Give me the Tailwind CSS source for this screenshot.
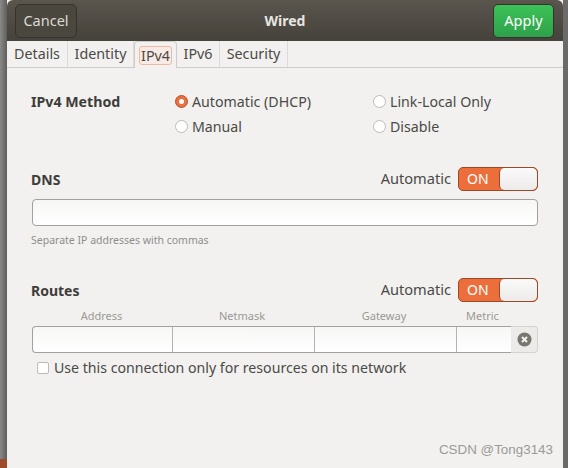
<!DOCTYPE html>
<html>
  <head>
    <title>Wired</title>
    <script src="https://cdn.jsdelivr.net/npm/@tailwindcss/browser@4"></script>
  </head>
  <body class="h-[468px] w-[568px] overflow-hidden bg-[#6f6f6e] font-['Noto_Sans',sans-serif] text-[14px] text-[#3d3d3a]">
    <div class="flex h-[468px]">
      <!-- desktop showing on the left -->
      <div class="flex w-[7px] flex-col justify-end bg-gradient-to-r from-[#8a8a89] to-[#5e5e5d]">
        <div class="h-[9px] bg-[#9c4a28]"></div>
      </div>

      <div class="relative flex w-[556px] flex-col bg-[#f2f1ef]">
        <!-- header -->
        <div class="flex h-[41px] items-center justify-between rounded-t-[6px] bg-gradient-to-b from-[#5a564e] to-[#45423b] pr-[9px] pl-[8px]">
          <div class="flex h-[34px] w-[62px] items-center justify-center rounded-[5px] border border-[#35332e] bg-[#4a473f] text-[14.5px] text-[#dcd9d2]">Cancel</div>
          <div class="text-[14px] font-bold text-[#e8e6e1]">Wired</div>
          <div class="flex h-[34px] w-[61px] items-center justify-center rounded-[5px] border border-[#35332e] bg-gradient-to-b from-[#3cc258] to-[#2ea14a] text-[14.5px] text-white">Apply</div>
        </div>

        <!-- tabs -->
        <div class="flex h-[27px] border-b border-[#cfcdc9] text-[14.3px] text-[#4a4a47]">
          <div class="flex w-[61px] items-center justify-center border-r border-[#dcdad6]">Details</div>
          <div class="flex w-[66px] items-center justify-center border-r border-[#dcdad6]">Identity</div>
          <div class="mb-[-1px] flex w-[43px] items-center justify-center rounded-t-[4px] border-x border-t border-[#cfcdc9] bg-[#f2f1ef]">
            <span class="rounded-[3px] border border-[#f0b9a2] bg-[#f8ebe5] px-[1px] leading-[17px]">IPv4</span>
          </div>
          <div class="flex w-[43px] items-center justify-center border-r border-[#dcdad6]">IPv6</div>
          <div class="flex w-[68px] items-center justify-center border-r border-[#dcdad6]">Security</div>
        </div>

        <!-- form -->
        <div class="flex flex-col pr-[25px] pl-[24px]">
          <div class="mt-[21px] flex">
            <div class="w-[144px] text-[14.2px] leading-[25px] font-bold">IPv4 Method</div>
            <div class="grid w-[320px] grid-cols-[198px_1fr] auto-rows-[25px] text-[14.2px] text-[#4a4a47]">
              <div class="flex items-center gap-[4px]">
                <span class="flex h-[13px] w-[13px] items-center justify-center rounded-full border border-[#b5532a] bg-[#e9703f]"><span class="h-[5px] w-[5px] rounded-full bg-white"></span></span>
                Automatic (DHCP)
              </div>
              <div class="flex items-center gap-[4px]">
                <span class="h-[13px] w-[13px] rounded-full border border-[#bdbbb7] bg-white"></span>
                Link-Local Only
              </div>
              <div class="flex items-center gap-[4px]">
                <span class="h-[13px] w-[13px] rounded-full border border-[#bdbbb7] bg-white"></span>
                Manual
              </div>
              <div class="flex items-center gap-[4px]">
                <span class="h-[13px] w-[13px] rounded-full border border-[#bdbbb7] bg-white"></span>
                Disable
              </div>
            </div>
          </div>

          <!-- DNS -->
          <div class="mt-[28px] flex h-[24px] items-center justify-between">
            <div class="font-bold">DNS</div>
            <div class="flex items-center gap-[7px]">
              <span class="text-[14.6px] text-[#4a4a47]">Automatic</span>
              <div class="flex h-[24px] w-[80px] overflow-hidden rounded-[5px] border border-[#9a4a2a] bg-[#ec6f3b]">
                <span class="w-[40px] pl-[8px] text-[14px] leading-[22px] text-white">ON</span>
                <span class="flex-1 rounded-[5px] border-l border-[#9a4a2a] bg-gradient-to-b from-[#fafafa] to-[#ecebe9]"></span>
              </div>
            </div>
          </div>
          <div class="mt-[8px] ml-[1px] h-[27px] rounded-[4px] border border-[#a3a19d] bg-gradient-to-b from-[#f7f7f6] to-white"></div>
          <div class="mt-[7px] text-[10.5px] leading-[14px] text-[#8f8e8b]">Separate IP addresses with commas</div>

          <!-- Routes -->
          <div class="mt-[31px] flex h-[24px] items-center justify-between">
            <div class="font-bold">Routes</div>
            <div class="flex items-center gap-[7px]">
              <span class="text-[14.6px] text-[#4a4a47]">Automatic</span>
              <div class="flex h-[24px] w-[80px] overflow-hidden rounded-[5px] border border-[#9a4a2a] bg-[#ec6f3b]">
                <span class="w-[40px] pl-[8px] text-[14px] leading-[22px] text-white">ON</span>
                <span class="flex-1 rounded-[5px] border-l border-[#9a4a2a] bg-gradient-to-b from-[#fafafa] to-[#ecebe9]"></span>
              </div>
            </div>
          </div>
          <div class="mt-[7px] ml-[1px] flex h-[15px] items-center text-center text-[11px] text-[#9a9996]">
            <span class="w-[139px]">Address</span>
            <span class="w-[142px]">Netmask</span>
            <span class="w-[142px]">Gateway</span>
            <span class="w-[55px]">Metric</span>
          </div>
          <div class="mt-[2px] ml-[1px] flex h-[27px]">
            <div class="flex flex-1 rounded-l-[4px] border border-r-0 border-[#a3a19d] bg-gradient-to-b from-[#f7f7f6] to-white">
              <div class="w-[140px] border-r border-[#b5b3af]"></div>
              <div class="w-[142px] border-r border-[#b5b3af]"></div>
              <div class="w-[142px] border-r border-[#b5b3af]"></div>
              <div class="flex-1"></div>
            </div>
            <div class="flex w-[27px] items-center justify-center rounded-r-[4px] border border-l-0 border-[#d5d3cf] bg-[#ecebe9]">
              <svg width="15" height="15" viewBox="0 0 15 15">
                <circle cx="7.5" cy="7.5" r="7" fill="#77766f" />
                <path d="M5 5l5 5M10 5l-5 5" stroke="#f2f1ef" stroke-width="2" />
              </svg>
            </div>
          </div>
          <div class="mt-[6px] ml-[6px] flex h-[18px] items-center gap-[5px] text-[14.15px] text-[#4a4a47]">
            <span class="h-[12px] w-[12px] rounded-[2px] border border-[#bdbbb7] bg-white"></span>
            Use this connection only for resources on its network
          </div>
        </div>

        <div class="absolute right-[10px] bottom-[10px] font-['Liberation_Sans',sans-serif] text-[13.4px] leading-[16px] text-[#9a9a99]">CSDN @Tong3143</div>
      </div>

      <!-- desktop showing on the right -->
      <div class="w-[5px] bg-[#6a6a69]"></div>
    </div>
  </body>
</html>
